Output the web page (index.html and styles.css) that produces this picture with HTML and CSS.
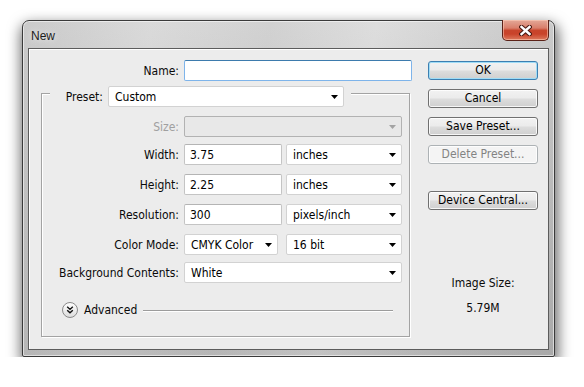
FILE: index.html
```html
<!DOCTYPE html>
<html>
<head>
<meta charset="utf-8">
<link rel="stylesheet" href="styles.css">
</head>
<body>
<div class="desk">
  <div class="window">
    <div class="titlebar">
      <span class="title">New</span>
      <span class="close">
        <svg width="13" height="11" viewBox="0 0 13 11">
          <path d="M2.5 2 L10.5 9 M10.5 2 L2.5 9" stroke="#4a1a12" stroke-width="4.6" stroke-linecap="square"/>
          <path d="M2.5 2 L10.5 9 M10.5 2 L2.5 9" stroke="#ffffff" stroke-width="2.4" stroke-linecap="square"/>
        </svg>
      </span>
    </div>
    <div class="client">
      <div class="main">
        <div class="name-row">
          <span class="lbl">Name:</span>
          <div class="input name"></div>
        </div>
        <fieldset class="group">
          <legend class="preset">
            <div class="preset-inner">
              <span class="plbl">Preset:</span>
              <div class="select w-preset"><span>Custom</span><svg class="arrow" width="7" height="4" viewBox="0 0 7 4"><path d="M0 0H7L3.5 4Z" fill="#000"/></svg></div>
            </div>
          </legend>
          <div class="row r-size">
            <span class="lbl disabled">Size:</span>
            <div class="select disabled w-full"><span></span><svg class="arrow" width="7" height="4" viewBox="0 0 7 4"><path d="M0 0H7L3.5 4Z" fill="#a3a3a3"/></svg></div>
          </div>
          <div class="row r-tight">
            <span class="lbl">Width:</span>
            <div class="input w-num">3.75</div>
            <div class="select w-unit gap4"><span>inches</span><svg class="arrow" width="7" height="4" viewBox="0 0 7 4"><path d="M0 0H7L3.5 4Z" fill="#000"/></svg></div>
          </div>
          <div class="row">
            <span class="lbl">Height:</span>
            <div class="input w-num">2.25</div>
            <div class="select w-unit gap4"><span>inches</span><svg class="arrow" width="7" height="4" viewBox="0 0 7 4"><path d="M0 0H7L3.5 4Z" fill="#000"/></svg></div>
          </div>
          <div class="row">
            <span class="lbl">Resolution:</span>
            <div class="input w-num">300</div>
            <div class="select w-unit gap4"><span>pixels/inch</span><svg class="arrow" width="7" height="4" viewBox="0 0 7 4"><path d="M0 0H7L3.5 4Z" fill="#000"/></svg></div>
          </div>
          <div class="row">
            <span class="lbl">Color Mode:</span>
            <div class="select w-mode"><span>CMYK Color</span><svg class="arrow" width="7" height="4" viewBox="0 0 7 4"><path d="M0 0H7L3.5 4Z" fill="#000"/></svg></div>
            <div class="select w-unit gap8"><span>16 bit</span><svg class="arrow" width="7" height="4" viewBox="0 0 7 4"><path d="M0 0H7L3.5 4Z" fill="#000"/></svg></div>
          </div>
          <div class="row r-tight">
            <span class="lbl">Background Contents:</span>
            <div class="select w-full"><span>White</span><svg class="arrow" width="7" height="4" viewBox="0 0 7 4"><path d="M0 0H7L3.5 4Z" fill="#000"/></svg></div>
          </div>
          <div class="advanced">
            <svg class="adv-icon" width="16" height="16" viewBox="0 0 16 16">
              <defs>
                <linearGradient id="ag" x1="0" y1="0" x2="0" y2="1">
                  <stop offset="0" stop-color="#ffffff"/>
                  <stop offset="1" stop-color="#dcdcdc"/>
                </linearGradient>
              </defs>
              <circle cx="8" cy="8" r="7.5" fill="url(#ag)" stroke="#8a8a8a"/>
              <path d="M5.2 4.8 L8 7.4 L10.8 4.8 M5.2 8.2 L8 10.8 L10.8 8.2" fill="none" stroke="#111" stroke-width="1.4"/>
            </svg>
            <span class="adv-text">Advanced</span>
            <span class="adv-line"></span>
          </div>
        </fieldset>
      </div>
      <div class="side">
        <div class="btn default">OK</div>
        <div class="btn">Cancel</div>
        <div class="btn">Save Preset...</div>
        <div class="btn disabled">Delete Preset...</div>
        <div class="btn device">Device Central...</div>
        <div class="imgsize">Image Size:</div>
        <div class="imgval">5.79M</div>
      </div>
    </div>
  </div>
</div>
</body>
</html>
```

FILE: styles.css
```css
* { box-sizing: border-box; }
html, body { margin: 0; background: #ffffff; }
body {
  font-family: "DejaVu Sans Condensed", "DejaVu Sans", sans-serif;
  font-size: 12px;
  color: #0a0a0a;
}
.desk { padding: 20px 0 0 22px; }

.window {
  width: 533px;
  height: 337px;
  border: 1px solid #3a3a3a;
  border-radius: 7px 7px 2px 2px;
  background:
    linear-gradient(to bottom, rgba(255,255,255,0.14), rgba(0,0,0,0.1)),
    linear-gradient(100deg, #c2c2c2 0%, #d4d4d4 22%, #cacaca 42%, #d8d8d8 60%, #c6c6c6 82%, #bcbcbc 100%);
  box-shadow: 1px 6px 14px 2px rgba(0,0,0,0.6), inset 0 0 0 1px rgba(255,255,255,0.55);
  display: flex;
  flex-direction: column;
  padding: 0 5px 6px 5px;
}

.titlebar {
  height: 27px;
  flex: none;
  display: flex;
  align-items: flex-start;
}
.title {
  flex: 1;
  margin: 8px 0 0 3px;
  font-family: "Liberation Sans", sans-serif;
  font-size: 12px;
  line-height: 14px;
  color: #1c1c1c;
  text-shadow: 0 0 6px rgba(255,255,255,0.8);
}
.close {
  margin-top: -1px;
  width: 47px;
  height: 21px;
  border: 1px solid #5b2218;
  border-top: none;
  border-radius: 0 0 5px 5px;
  background: linear-gradient(to bottom, #e4a897 0%, #d97f6b 40%, #c8452c 52%, #c9432a 70%, #dd7a5e 100%);
  box-shadow: inset 0 0 0 1px rgba(255,210,190,0.55);
  display: flex;
  align-items: center;
  justify-content: center;
}

.client {
  flex: 1;
  border: 1px solid #5c5c5c;
  background: #ececec;
  box-shadow: inset 1px 1px 0 #ffffff;
  display: flex;
  align-items: flex-start;
}

.main {
  margin-left: 12px;
  padding-top: 11px;
  width: 371px;
}
.name-row {
  display: flex;
  align-items: center;
  height: 21px;
}
.name-row .lbl {
  width: 138px;
  text-align: right;
  margin-right: 5px;
}

.input {
  height: 21px;
  background: #ffffff;
  border: 1px solid #c4c4c4;
  border-top-color: #b4b4b4;
  border-radius: 2px;
  padding-left: 5px;
  display: flex;
  align-items: center;
  color: #000;
}
.input.name {
  width: 228px;
  border-color: #7eb4ea;
  border-top-color: #3d7bad;
}
.w-num { width: 98px; }

.select {
  height: 21px;
  background: #ffffff;
  border: 1px solid #d2d2d2;
  border-radius: 2px;
  padding: 0 5px 0 6px;
  display: flex;
  align-items: center;
  justify-content: space-between;
  color: #000;
}
.select.disabled {
  background: #e8e8e8;
  border-color: #b2b2b2;
}
.arrow { flex: none; }
.w-preset { width: 236px; }
.w-full { width: 218px; }
.w-unit { width: 116px; }
.w-mode { width: 94px; }
.gap4 { margin-left: 4px; }
.gap8 { margin-left: 8px; }

.group {
  margin: -1px 0 0 0;
  padding: 0 0 18px 0;
  width: 369px;
  min-width: 0;
  border: 1px solid #a3a3a3;
  box-shadow: 1px 1px 0 #ffffff, inset 1px 1px 0 #ffffff;
}
.preset {
  margin-left: 8px;
  padding: 6px 7px 0 8px;
  background: #ececec;
}
.preset-inner {
  display: flex;
  align-items: center;
}
.plbl {
  width: 45px;
  text-align: right;
  margin-right: 5px;
}

.row {
  display: flex;
  align-items: center;
  height: 21px;
  margin-top: 9px;
}
.row.r-tight { margin-top: 7px; }
.row .lbl {
  width: 137px;
  text-align: right;
  margin-right: 5px;
  white-space: nowrap;
}
.lbl.disabled { color: #a0a0a0; }

.advanced {
  display: flex;
  align-items: center;
  height: 16px;
  margin-top: 19px;
  padding-left: 20px;
}
.adv-icon { flex: none; }
.adv-text { margin-left: 6px; }
.adv-line {
  flex: 1;
  height: 1px;
  background: #9c9c9c;
  box-shadow: 0 1px 0 #ffffff;
  margin: 0 16px 0 6px;
}

.side {
  margin-left: 16px;
  padding-top: 12px;
  width: 110px;
  display: flex;
  flex-direction: column;
}
.btn {
  height: 19px;
  margin-top: 9px;
  border: 1px solid #707070;
  border-radius: 3px;
  background: linear-gradient(to bottom, #f2f2f2 0%, #ebebeb 48%, #dddddd 52%, #cfcfcf 100%);
  box-shadow: inset 0 0 0 1px rgba(255,255,255,0.8);
  text-align: center;
  line-height: 17px;
  color: #000;
}
.btn.default {
  margin-top: 0;
  border-color: #3c7fb1;
  box-shadow: inset 0 0 0 1px #9fdcf6;
}
.btn.disabled {
  border-color: #adb2b5;
  background: #f4f4f4;
  color: #838383;
}
.btn.device { margin-top: 27px; }
.imgsize {
  margin-top: 66px;
  line-height: 14px;
  text-align: center;
}
.imgval {
  margin-top: 11px;
  line-height: 14px;
  text-align: center;
}
```
